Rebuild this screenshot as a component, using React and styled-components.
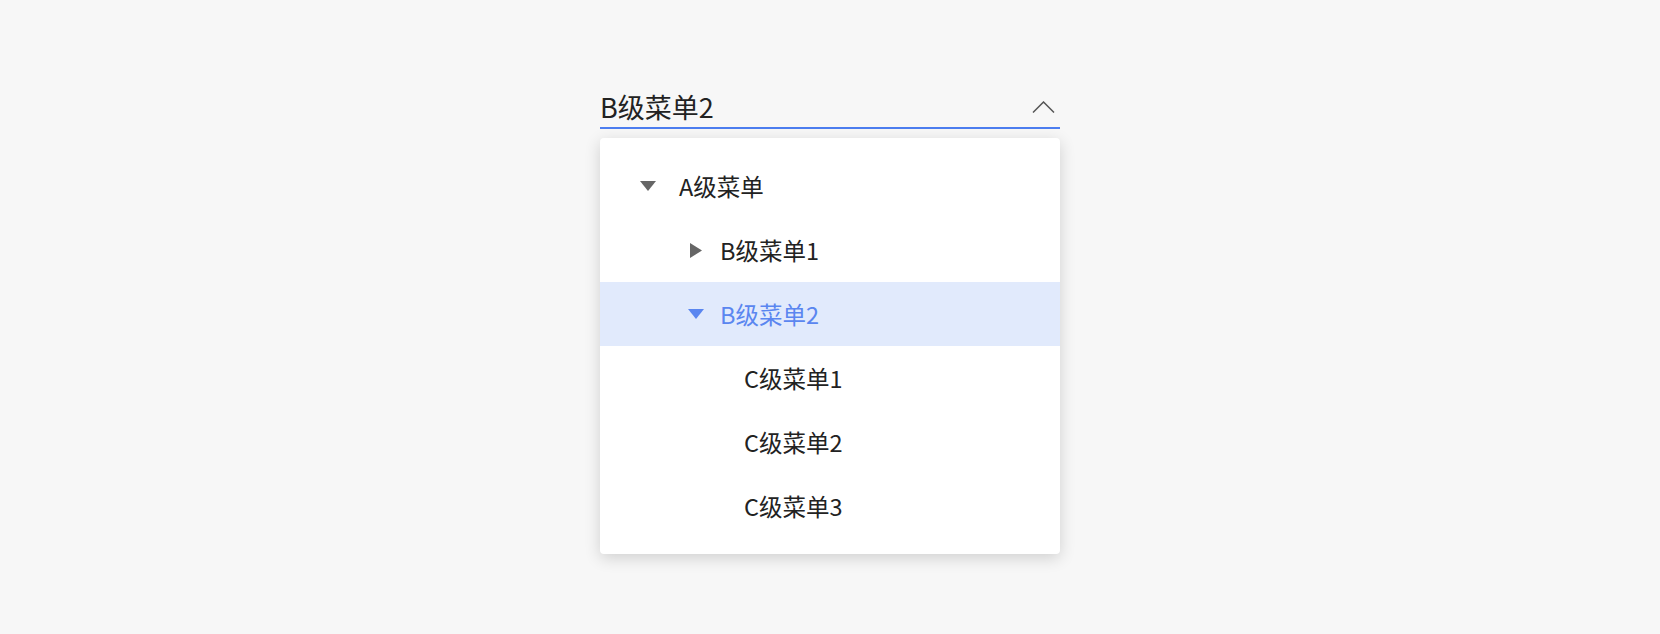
import React from "react";
import styled, { createGlobalStyle } from "styled-components";

const GlobalStyle = createGlobalStyle`
  html, body {
    margin: 0;
    padding: 0;
    background: #f7f7f7;
    font-family: "Noto Sans CJK SC", "Noto Sans", sans-serif;
  }
`;

const Page = styled.div`
  width: 1660px;
  height: 634px;
  display: flex;
  justify-content: center;
  padding-top: 86px;
  box-sizing: border-box;
`;

const Select = styled.div`
  width: 460px;
  display: flex;
  flex-direction: column;
`;

const Trigger = styled.div`
  height: 41px;
  display: flex;
  align-items: center;
  justify-content: space-between;
  border-bottom: 2px solid #4d7ef0;
  color: #222;
  font-size: 27px;
  padding-right: 5px;
`;

const Panel = styled.div`
  margin-top: 9px;
  background: #fff;
  border-radius: 4px;
  box-shadow: 0 4px 16px rgba(0, 0, 0, 0.16);
  padding: 16px 0;
`;

const Row = styled.div`
  height: 64px;
  display: flex;
  align-items: center;
  padding-left: ${(p) => p.$indent}px;
  background: ${(p) => (p.$active ? "#e1eafc" : "transparent")};
  color: ${(p) => (p.$active ? "#5a86f0" : "#222")};
  font-size: 23.5px;
`;

const Arrow = styled.span`
  width: 16px;
  display: flex;
  justify-content: center;
  margin-right: ${(p) => p.$gap}px;
  color: ${(p) => (p.$active ? "#5a86f0" : "#666")};
`;

const Down = () => (
  <svg width="16" height="10" viewBox="0 0 16 10">
    <path d="M0 0 H16 L8 10 Z" fill="currentColor" />
  </svg>
);

const Right = () => (
  <svg width="12" height="15" viewBox="0 0 12 15">
    <path d="M0 0 L12 7.5 L0 15 Z" fill="currentColor" />
  </svg>
);

const Chevron = () => (
  <svg width="23" height="12" viewBox="0 0 23 12">
    <path d="M1 11.5 L11.5 1 L22 11.5" fill="none" stroke="#555" strokeWidth="1.5" />
  </svg>
);

const items = [
  { label: "A级菜单", indent: 40, arrow: "down", gap: 23 },
  { label: "B级菜单1", indent: 88, arrow: "right", gap: 16 },
  { label: "B级菜单2", indent: 88, arrow: "down", gap: 16, active: true },
  { label: "C级菜单1", indent: 144 },
  { label: "C级菜单2", indent: 144 },
  { label: "C级菜单3", indent: 144 },
];

export default function App() {
  return (
    <>
      <GlobalStyle />
      <Page>
        <Select>
          <Trigger>
            <span>B级菜单2</span>
            <Chevron />
          </Trigger>
          <Panel>
            {items.map((it) => (
              <Row key={it.label} $indent={it.indent} $active={it.active}>
                {it.arrow && (
                  <Arrow $gap={it.gap} $active={it.active}>
                    {it.arrow === "down" ? <Down /> : <Right />}
                  </Arrow>
                )}
                <span>{it.label}</span>
              </Row>
            ))}
          </Panel>
        </Select>
      </Page>
    </>
  );
}
